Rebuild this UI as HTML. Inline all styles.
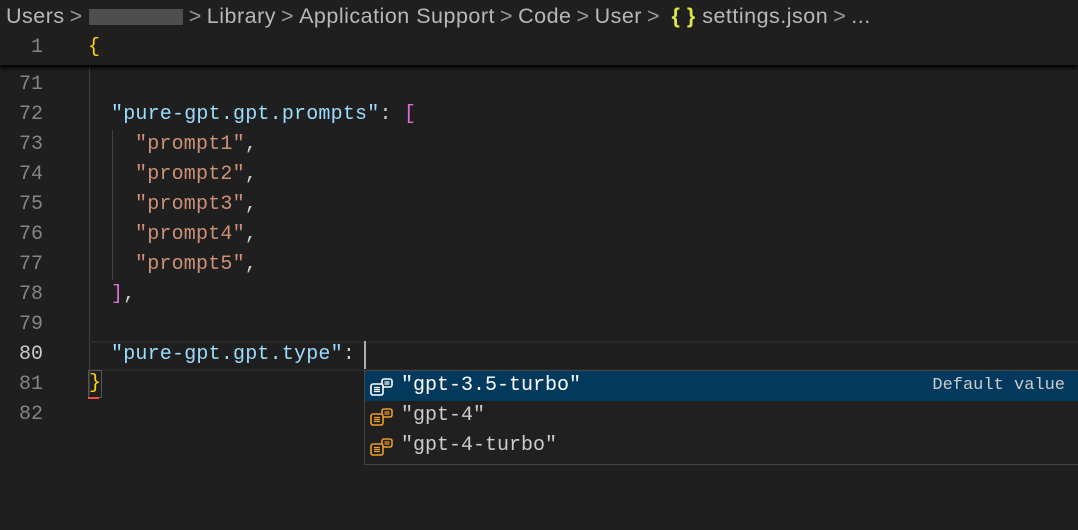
<!DOCTYPE html>
<html><head><meta charset="utf-8"><style>
*{margin:0;padding:0;box-sizing:border-box}
body{width:1078px;height:530px;background:#1f1f1f;overflow:hidden;position:relative;font-family:"Liberation Mono",monospace;}
.bc{position:absolute;top:0;left:0;height:32px;width:1078px;font-family:"Liberation Sans",sans-serif;font-size:21.5px;letter-spacing:0.5px;color:#b8b8b8;line-height:32px;padding-left:6px;white-space:nowrap}
.bc .s{color:#9a9a9a;margin:0 5px}
.blur{display:inline-block;width:94px;height:16px;background:#5a5a5a;vertical-align:middle;margin:0 1px;opacity:.8}
.sticky{position:absolute;top:32px;left:0;width:1078px;height:33px;background:#1f1f1f;box-shadow:0 3px 4px #000;z-index:3}
.ln{position:absolute;right:1035px;width:60px;text-align:right;color:#858585;font-size:20px;line-height:30px}
.code{position:absolute;font-size:20px;line-height:30px;white-space:pre;letter-spacing:0.2px}
.k{color:#9cdcfe}.v{color:#ce9178}.p{color:#cccccc}.g{color:#ffd700}.m{color:#da70d6}
.guide{position:absolute;width:1px;background:#404040}
.cur{position:absolute;left:88px;top:341px;width:990px;height:30px;border-top:2px solid #282828;border-bottom:2px solid #282828}
.sug{position:absolute;left:364px;top:370px;width:720px;height:95px;background:#202020;border:1px solid #454545;z-index:4;font-size:20px}
.row{height:30px;line-height:30px;position:relative;padding-left:36px;color:#cccccc;white-space:pre}
.row.sel{background:#04395e;color:#fff}
.row .d{position:absolute;right:18px;top:0;font-size:17px;color:#cccccc}
.ic{position:absolute;left:5px;top:7px}
</style></head><body>
<div class="bc">Users<span class="s">&gt;</span><span class="blur"></span><span class="s">&gt;</span>Library<span class="s">&gt;</span>Application Support<span class="s">&gt;</span>Code<span class="s">&gt;</span>User<span class="s">&gt;</span> <span style="color:#e2e24a;font-weight:bold">{ }</span> settings.json<span class="s">&gt;</span>...</div>
<div class="sticky">
<div class="ln" style="top:1px">1</div>
<div class="code g" style="left:88px;top:1px">{</div>
</div>
<div class="guide" style="left:89px;top:65px;height:330px"></div>
<div class="guide" style="left:112px;top:130px;height:150px"></div>
<div class="cur"></div>
<div class="ln" style="top:70px">71</div>
<div class="ln" style="top:100px">72</div>
<div class="ln" style="top:130px">73</div>
<div class="ln" style="top:160px">74</div>
<div class="ln" style="top:190px">75</div>
<div class="ln" style="top:220px">76</div>
<div class="ln" style="top:250px">77</div>
<div class="ln" style="top:280px">78</div>
<div class="ln" style="top:310px">79</div>
<div class="ln" style="top:340px;color:#cccccc">80</div>
<div class="ln" style="top:370px">81</div>
<div class="ln" style="top:400px">82</div>
<div class="code" style="left:111px;top:100px"><span class="k">"pure-gpt.gpt.prompts"</span><span class="p">: </span><span class="m">[</span></div>
<div class="code" style="left:135px;top:130px"><span class="v">"prompt1"</span><span class="p">,</span></div>
<div class="code" style="left:135px;top:160px"><span class="v">"prompt2"</span><span class="p">,</span></div>
<div class="code" style="left:135px;top:190px"><span class="v">"prompt3"</span><span class="p">,</span></div>
<div class="code" style="left:135px;top:220px"><span class="v">"prompt4"</span><span class="p">,</span></div>
<div class="code" style="left:135px;top:250px"><span class="v">"prompt5"</span><span class="p">,</span></div>
<div class="code" style="left:111px;top:280px"><span class="m">]</span><span class="p">,</span></div>
<div class="code" style="left:111px;top:340px"><span class="k">"pure-gpt.gpt.type"</span><span class="p">: </span></div>
<div style="position:absolute;left:364px;top:341px;width:2px;height:28px;background:#aeafad"></div>
<div class="code g" style="left:88px;top:370px;border:1px solid #555;height:28px;line-height:26px">}</div>
<div style="position:absolute;left:88px;top:397px;width:11px;height:2px;background:#f14c4c"></div>
<div class="sug">
<div class="row sel"><svg class="ic" width="24" height="18" viewBox="0 0 24 18"><rect x="12" y="1" width="10" height="8" rx="2" fill="none" stroke="#fff" stroke-width="1.6"/><path d="M14.5 4h5M14.5 6h5" stroke="#fff" stroke-width="1.2"/><rect x="1" y="6" width="12" height="11" rx="2" fill="#04395e" stroke="#fff" stroke-width="1.6"/><path d="M4 9.5h6M4 11.5h6M4 13.5h6" stroke="#fff" stroke-width="1.2"/></svg>"gpt-3.5-turbo"<span class="d">Default value</span></div>
<div class="row"><svg class="ic" width="24" height="18" viewBox="0 0 24 18"><rect x="12" y="1" width="10" height="8" rx="2" fill="none" stroke="#ee9d28" stroke-width="1.6"/><path d="M14.5 4h5M14.5 6h5" stroke="#ee9d28" stroke-width="1.2"/><rect x="1" y="6" width="12" height="11" rx="2" fill="#202020" stroke="#ee9d28" stroke-width="1.6"/><path d="M4 9.5h6M4 11.5h6M4 13.5h6" stroke="#ee9d28" stroke-width="1.2"/></svg>"gpt-4"</div>
<div class="row"><svg class="ic" width="24" height="18" viewBox="0 0 24 18"><rect x="12" y="1" width="10" height="8" rx="2" fill="none" stroke="#ee9d28" stroke-width="1.6"/><path d="M14.5 4h5M14.5 6h5" stroke="#ee9d28" stroke-width="1.2"/><rect x="1" y="6" width="12" height="11" rx="2" fill="#202020" stroke="#ee9d28" stroke-width="1.6"/><path d="M4 9.5h6M4 11.5h6M4 13.5h6" stroke="#ee9d28" stroke-width="1.2"/></svg>"gpt-4-turbo"</div>
</div>
</body></html>
